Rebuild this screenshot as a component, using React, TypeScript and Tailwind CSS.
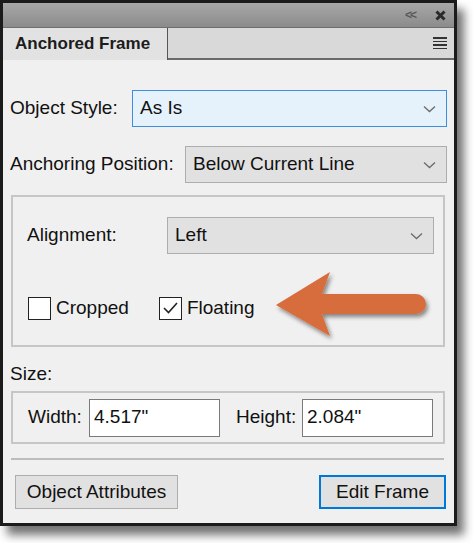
import React from "react";

const font = { fontFamily: '"Liberation Sans", Arial, sans-serif' };

function Chevron() {
  return (
    <svg width="13" height="8" viewBox="0 0 13 8" className="shrink-0">
      <path d="M1 1.5 L6.5 6.5 L12 1.5" fill="none" stroke="#6b6b6b" strokeWidth="1.3" />
    </svg>
  );
}

function Select({
  value,
  width,
  active,
}: {
  value: string;
  width: string;
  active?: boolean;
}) {
  return (
    <div
      className={`${width} h-[37px] ml-auto flex items-center justify-between pl-[7px] pr-[10px] border ${
        active ? "border-[#3c8ee0] bg-[#e5f1fb]" : "border-[#adadad] bg-[#e1e1e1]"
      }`}
    >
      <span className="text-[19px] text-[#111]">{value}</span>
      <Chevron />
    </div>
  );
}

function Checkbox({ checked, label }: { checked?: boolean; label: string }) {
  return (
    <div className="flex items-center gap-[5px]">
      <div className="w-[23px] h-[23px] border-[1.5px] border-[#222] bg-white flex items-center justify-center">
        {checked && (
          <svg width="17" height="14" viewBox="0 0 17 14">
            <path d="M2 7 L6.5 11.5 L15 2" fill="none" stroke="#222" strokeWidth="1.6" />
          </svg>
        )}
      </div>
      <span className="text-[19px] text-[#111]">{label}</span>
    </div>
  );
}

function Arrow() {
  return (
    <svg
      className="absolute left-[268px] top-[264px]"
      width="170"
      height="84"
      viewBox="0 0 170 84"
    >
      <defs>
        <filter id="sh" x="-10%" y="-20%" width="130%" height="150%">
          <feDropShadow dx="2" dy="3" stdDeviation="2" floodColor="#000" floodOpacity="0.45" />
        </filter>
      </defs>
      <path
        d="M8 41 L62 8 L54 30 L148 30 A10 10 0 0 1 148 50 L54 50 L62 72 Z"
        fill="#d76c3c"
        filter="url(#sh)"
      />
    </svg>
  );
}

function Field({ value }: { value: string }) {
  return (
    <div className="w-[131px] h-[38px] border border-[#7a7a7a] bg-white flex items-center pl-[4px] text-[19px]">
      {value}
    </div>
  );
}

export default function App() {
  return (
    <div className="w-[474px] h-[543px] bg-white relative" style={font}>
      <div className="w-[457px] h-[526px] border-[3px] border-[#1b1b1b] flex flex-col shadow-[7px_9px_9px_rgba(0,0,0,0.55)] bg-[#f0f0f0]">
        {/* title bar */}
        <div className="h-[25px] shrink-0 bg-gradient-to-b from-[#a8a8a8] to-[#8b8b8b] border-b border-[#6f6f6f] flex items-center justify-end gap-[20px] pr-[8px]">
          <span className="text-[12px] font-bold tracking-[-2px] text-[#5a5a5a] leading-none">&lt;&lt;</span>
          <svg width="11" height="11" viewBox="0 0 11 11">
            <path d="M1.5 1.5 L9.5 9.5 M9.5 1.5 L1.5 9.5" stroke="#2a2a2a" strokeWidth="3" />
          </svg>
        </div>
        {/* tab row */}
        <div className="h-[32px] shrink-0 flex bg-[#d9d9d9]">
          <div className="w-[165px] bg-[#e2e2e2] border-r border-[#555] flex items-center pl-[12px]">
            <span className="text-[17px] font-bold text-[#1c1c1c]">Anchored Frame</span>
          </div>
          <div className="flex-1 border-b-2 border-[#6a6a6a] flex items-center justify-end pr-[7px]">
            <div className="flex flex-col gap-[2px]">
              <div className="w-[14px] h-[1.5px] bg-[#333]" />
              <div className="w-[14px] h-[1.5px] bg-[#333]" />
              <div className="w-[14px] h-[1.5px] bg-[#333]" />
              <div className="w-[14px] h-[1.5px] bg-[#333]" />
            </div>
          </div>
        </div>
        {/* body */}
        <div className="flex-1 flex flex-col px-[7px] relative text-[#111]">
          <div className="mt-[30px] flex items-center">
            <span className="text-[19px]">Object Style:</span>
            <Select value="As Is" width="w-[315px]" active />
          </div>
          <div className="mt-[19px] flex items-center">
            <span className="text-[19px]">Anchoring Position:</span>
            <Select value="Below Current Line" width="w-[262px]" />
          </div>
          <div className="mt-[12px] ml-[1px] w-[434px] h-[152px] border-2 border-[#c6c6c6] flex flex-col pl-[14px] pr-[9px]">
            <div className="mt-[20px] flex items-center">
              <span className="text-[19px]">Alignment:</span>
              <Select value="Left" width="w-[267px]" />
            </div>
            <div className="mt-[40px] flex items-center gap-[30px] pl-[1px]">
              <Checkbox label="Cropped" />
              <Checkbox label="Floating" checked />
            </div>
          </div>
          <div className="mt-[15px] text-[19px] leading-[24px]">Size:</div>
          <div className="mt-[5px] ml-[1px] w-[434px] h-[53px] border-2 border-[#c6c6c6] flex items-center pl-[15px]">
            <span className="w-[61px] text-[19px]">Width:</span>
            <Field value={'4.517"'} />
            <span className="ml-[16px] w-[66px] text-[19px]">Height:</span>
            <Field value={'2.084"'} />
          </div>
          <div className="mt-[14px] ml-[1px] w-[433px] h-[2px] bg-[#bdbdbd]" />
          <div className="mt-[15px] flex items-center justify-between pl-[5px] pr-[1px]">
            <div className="w-[163px] h-[34px] border border-[#adadad] bg-[#e1e1e1] flex items-center justify-center text-[19px]">
              Object Attributes
            </div>
            <div className="w-[127px] h-[34px] border-2 border-[#0078d7] bg-[#e1e1e1] flex items-center justify-center text-[19px]">
              Edit Frame
            </div>
          </div>
        </div>
      </div>
      <Arrow />
    </div>
  );
}
